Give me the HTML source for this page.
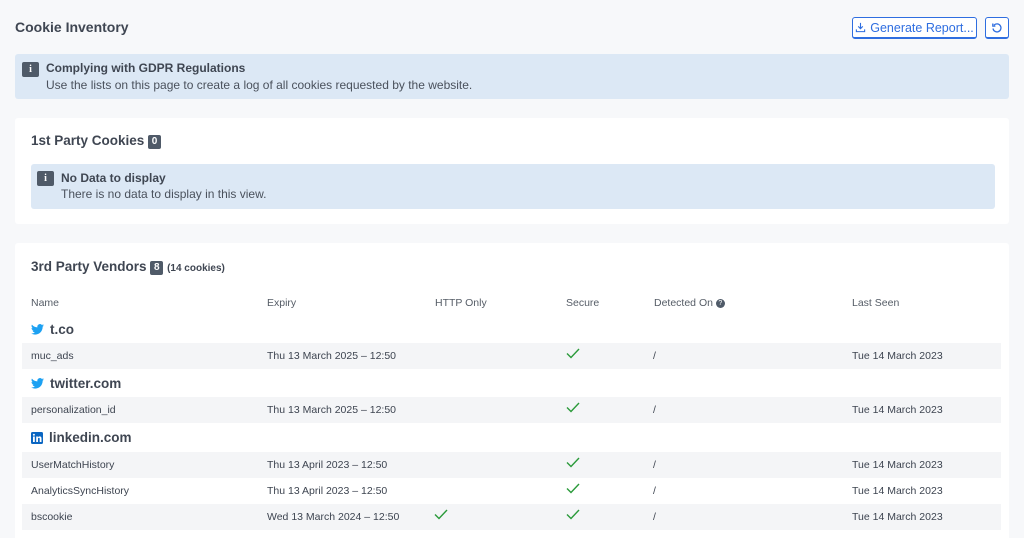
<!DOCTYPE html>
<html style="width:1024px;height:538px;overflow:hidden"><head><meta charset="utf-8"><style>
*{box-sizing:border-box;margin:0;padding:0}
body{width:1024px;height:538px;overflow:hidden;background:#f7f8fa;font-family:"Liberation Sans",sans-serif;color:#3d4450;position:relative}
.abs{position:absolute}
.title{left:15px;top:19px;font-size:14px;font-weight:bold;color:#3f4652}
.btn{top:17px;height:22px;border:1px solid #2f6ee0;border-bottom-width:2px;border-radius:3px;background:#fff;color:#2f6ee0;font-size:12.5px;display:flex;align-items:center;justify-content:center}
.alert{background:#dce8f5;border-radius:3px}
.ibadge{display:inline-block;width:17px;height:15px;background:#4f5a68;border-radius:2px;color:#fff;font-size:10px;text-align:center;line-height:15px;font-family:"Liberation Serif",serif;font-weight:bold}
.card{background:#fff;left:15px;width:994px;border-radius:3px}
.h2{font-size:13.5px;font-weight:bold;color:#3f4652}
.nb{display:inline-block;background:#4f5a68;color:#fff;font-size:10px;border-radius:2px;width:13px;text-align:center;height:14px;line-height:14px;vertical-align:1px;font-weight:bold}
.th{top:297px;font-size:10.5px;color:#555c66}
.row{left:22px;width:979px;height:26px;font-size:10.5px;color:#3d4450}
.row span{position:absolute;top:7px}
.grey{background:#f4f5f7}
.vend{left:31px;font-size:13.5px;font-weight:bold;color:#3f4652;display:flex;align-items:center;gap:6px}
.ck{position:absolute;top:5px}
</style></head><body>
<div class="abs title">Cookie Inventory</div>
<div class="abs btn" style="left:852px;width:125px"><svg width="11" height="11" viewBox="0 0 12 12" style="margin-right:4px"><path d="M6 1v6M3.5 4.8L6 7.3l2.5-2.5M1.5 8v2.5h9V8" fill="none" stroke="#2f6ee0" stroke-width="1.2"/></svg>Generate Report...</div>
<div class="abs btn" style="left:985px;width:24px"><svg width="12" height="12" viewBox="0 0 12 12"><path d="M3 3.2A4 4 0 1 1 2 6.5" fill="none" stroke="#2f6ee0" stroke-width="1.3"/><path d="M1.8 1.5v2.6h2.6" fill="none" stroke="#2f6ee0" stroke-width="1.3"/></svg></div>
<div class="abs alert" style="left:15px;top:54px;width:994px;height:45px"></div>
<div class="abs ibadge" style="left:22px;top:62px">i</div>
<div class="abs" style="left:46px;top:61px;font-size:12px;font-weight:bold;color:#3f4652">Complying with GDPR Regulations</div>
<div class="abs" style="left:46px;top:78px;font-size:12px;color:#4a515c">Use the lists on this page to create a log of all cookies requested by the website.</div>

<div class="abs card" style="top:118px;height:106px"></div>
<div class="abs h2" style="left:31px;top:133px">1st Party Cookies <span class="nb">0</span></div>
<div class="abs alert" style="left:31px;top:164px;width:964px;height:45px"></div>
<div class="abs ibadge" style="left:37px;top:171px">i</div>
<div class="abs" style="left:61px;top:171px;font-size:12px;font-weight:bold;color:#3f4652">No Data to display</div>
<div class="abs" style="left:61px;top:187px;font-size:12px;color:#4a515c">There is no data to display in this view.</div>

<div class="abs card" style="top:243px;height:300px"></div>
<div class="abs h2" style="left:31px;top:259px">3rd Party Vendors <span class="nb">8</span> <span style="font-size:10px">(14 cookies)</span></div>
<div class="abs th" style="left:31px">Name</div>
<div class="abs th" style="left:267px">Expiry</div>
<div class="abs th" style="left:435px">HTTP Only</div>
<div class="abs th" style="left:566px">Secure</div>
<div class="abs th" style="left:654px">Detected On <span style="display:inline-block;width:9px;height:9px;border-radius:50%;background:#4f5a68;color:#fff;font-size:7px;text-align:center;line-height:9px;vertical-align:1px">?</span></div>
<div class="abs th" style="left:852px">Last Seen</div>

<div class="abs vend" style="top:322px"><svg width="13" height="11" viewBox="0 0 24 20"><path d="M24 2.4a9.8 9.8 0 0 1-2.8.8A4.9 4.9 0 0 0 23.3.4a9.9 9.9 0 0 1-3.1 1.2A4.9 4.9 0 0 0 11.8 6 14 14 0 0 1 1.7.9a4.9 4.9 0 0 0 1.5 6.6 4.9 4.9 0 0 1-2.2-.6 4.9 4.9 0 0 0 3.9 4.8 4.9 4.9 0 0 1-2.2.1 4.9 4.9 0 0 0 4.6 3.4A9.9 9.9 0 0 1 0 17.2 14 14 0 0 0 7.5 19.4c9.1 0 14-7.5 14-14v-.6A10 10 0 0 0 24 2.4z" fill="#1da1f2"/></svg>t.co</div>
<div class="abs row grey" style="top:343px"><span style="left:9px">muc_ads</span><span style="left:245px">Thu 13 March 2025 – 12:50</span><svg class="ck" style="left:544px" width="14" height="11" viewBox="0 0 14 11"><path d="M1 5.5l4 4L13 1" fill="none" stroke="#2a9a3a" stroke-width="1.4"/></svg><span style="left:631px">/</span><span style="left:830px">Tue 14 March 2023</span></div>
<div class="abs vend" style="top:376px"><svg width="13" height="11" viewBox="0 0 24 20"><path d="M24 2.4a9.8 9.8 0 0 1-2.8.8A4.9 4.9 0 0 0 23.3.4a9.9 9.9 0 0 1-3.1 1.2A4.9 4.9 0 0 0 11.8 6 14 14 0 0 1 1.7.9a4.9 4.9 0 0 0 1.5 6.6 4.9 4.9 0 0 1-2.2-.6 4.9 4.9 0 0 0 3.9 4.8 4.9 4.9 0 0 1-2.2.1 4.9 4.9 0 0 0 4.6 3.4A9.9 9.9 0 0 1 0 17.2 14 14 0 0 0 7.5 19.4c9.1 0 14-7.5 14-14v-.6A10 10 0 0 0 24 2.4z" fill="#1da1f2"/></svg>twitter.com</div>
<div class="abs row grey" style="top:397px"><span style="left:9px">personalization_id</span><span style="left:245px">Thu 13 March 2025 – 12:50</span><svg class="ck" style="left:544px" width="14" height="11" viewBox="0 0 14 11"><path d="M1 5.5l4 4L13 1" fill="none" stroke="#2a9a3a" stroke-width="1.4"/></svg><span style="left:631px">/</span><span style="left:830px">Tue 14 March 2023</span></div>
<div class="abs vend" style="top:430px"><svg width="12" height="12" viewBox="0 0 12 12"><rect width="12" height="12" rx="1.5" fill="#0a66c2"/><rect x="2" y="4.5" width="1.8" height="5.5" fill="#fff"/><circle cx="2.9" cy="2.7" r="1" fill="#fff"/><path d="M5.2 4.5h1.7v.8c.4-.6 1-.9 1.8-.9 1.300 0 1.8.8 1.8 2.2V10H8.7V7c0-.8-.3-1.2-.9-1.2S7 6.3 7 7v3H5.2z" fill="#fff"/></svg>linkedin.com</div>
<div class="abs row grey" style="top:452px"><span style="left:9px">UserMatchHistory</span><span style="left:245px">Thu 13 April 2023 – 12:50</span><svg class="ck" style="left:544px" width="14" height="11" viewBox="0 0 14 11"><path d="M1 5.5l4 4L13 1" fill="none" stroke="#2a9a3a" stroke-width="1.4"/></svg><span style="left:631px">/</span><span style="left:830px">Tue 14 March 2023</span></div>
<div class="abs row" style="top:478px"><span style="left:9px">AnalyticsSyncHistory</span><span style="left:245px">Thu 13 April 2023 – 12:50</span><svg class="ck" style="left:544px" width="14" height="11" viewBox="0 0 14 11"><path d="M1 5.5l4 4L13 1" fill="none" stroke="#2a9a3a" stroke-width="1.4"/></svg><span style="left:631px">/</span><span style="left:830px">Tue 14 March 2023</span></div>
<div class="abs row grey" style="top:504px"><span style="left:9px">bscookie</span><span style="left:245px">Wed 13 March 2024 – 12:50</span><svg class="ck" style="left:412px" width="14" height="11" viewBox="0 0 14 11"><path d="M1 5.5l4 4L13 1" fill="none" stroke="#2a9a3a" stroke-width="1.4"/></svg><svg class="ck" style="left:544px" width="14" height="11" viewBox="0 0 14 11"><path d="M1 5.5l4 4L13 1" fill="none" stroke="#2a9a3a" stroke-width="1.4"/></svg><span style="left:631px">/</span><span style="left:830px">Tue 14 March 2023</span></div>
</body></html>
